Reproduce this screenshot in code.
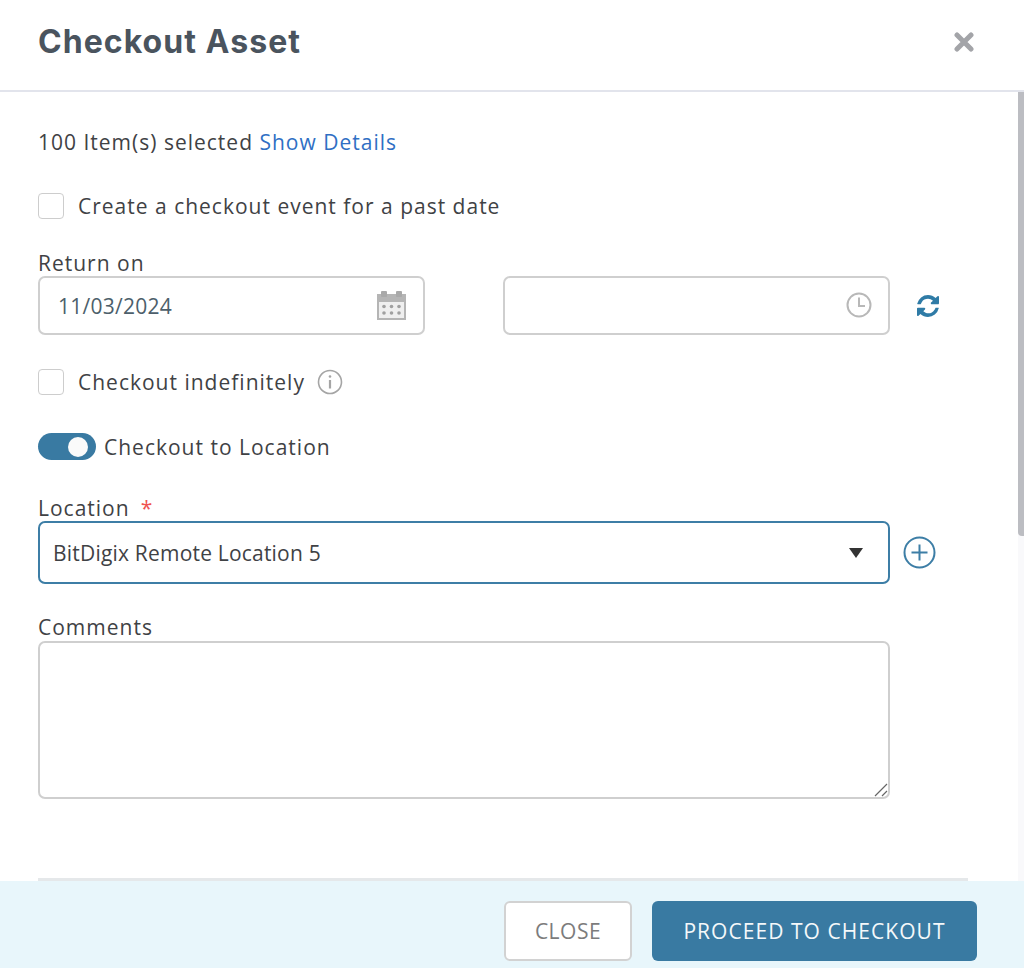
<style>
:global(body){margin:0;background:#fff}
.modal{width:1024px;height:968px;display:flex;flex-direction:column;overflow:hidden;font-family:"Open Sans",sans-serif;font-size:21px;letter-spacing:1px;color:#3f4245}
.head{height:92px;flex:none;box-sizing:border-box;border-bottom:2px solid #e2e4ec;display:flex;align-items:center;justify-content:space-between;padding:0 50px 6px 38px}
h1{margin:0;font:700 32px/1.2 Inter,sans-serif;letter-spacing:1.05px;color:#4a545e}
.x{width:20px;height:20px;display:block}
.mid{flex:1;min-height:0;display:flex}
.content{flex:1;display:flex;flex-direction:column;padding:0 0 0 38px}
.scroll{width:6px;flex:none;background:#f9f9fb}
.thumb{height:444px;background:#bcbdc2;border-radius:0 0 0 4px}
.row{display:flex;align-items:center}
.sel{margin-top:35px;line-height:30px}
a{color:#2f6fc4;text-decoration:none}
.check{margin-top:36px}
.box{width:24px;height:24px;border:1.5px solid #cdcdcd;border-radius:4px;margin-right:14px;box-sizing:content-box;flex:none}
.lbl{line-height:26px}
.ret{margin-top:31px;line-height:26px}
.fields{display:flex;margin-top:0}
.input{width:387px;height:59px;box-sizing:border-box;border:2px solid #cfcfcf;border-radius:7px;display:flex;align-items:center;justify-content:space-between;padding:0 17px 0 18px;color:#4d5f6b;flex:none;letter-spacing:.25px}
.input svg{position:relative;top:-1px}
.input+.input{margin-left:78px;padding-right:16px}
.refresh{margin-left:27px;width:22px;height:22px}
.ind{margin-top:34px}
.info{margin-left:12px;width:26px;height:26px}
.tog{margin-top:38px}
.switch{width:58px;height:27px;border-radius:14px;background:#397aa2;position:relative;margin-right:8px;flex:none}
.knob{position:absolute;right:8px;top:3.5px;width:20px;height:20px;border-radius:50%;background:#fafafa}
.loc{margin-top:35px;line-height:26px;display:flex}
.star{color:#ef5350;margin-left:11px}
.sel2{width:852px;height:63px;box-sizing:border-box;border:2px solid #3d7ea6;border-radius:7px;display:flex;align-items:center;justify-content:space-between;padding:0 25px 0 13px;color:#3f4245;flex:none;letter-spacing:.2px}
.caret{width:0;height:0;border-left:7px solid transparent;border-right:7px solid transparent;border-top:10px solid #333}
.plus{margin-left:13px;width:33px;height:33px}
.com{margin-top:30px;line-height:26px}
.area{width:852px;height:158px;box-sizing:border-box;border:2px solid #cfcfcf;border-radius:7px;position:relative;margin-top:1px;flex:none}
.grip{position:absolute;right:0;bottom:0;width:14px;height:14px}
.rule{margin-top:auto;height:3px;width:930px;background:#e5e8ea}
.foot{height:87px;flex:none;background:#e8f6fb;display:flex;justify-content:flex-end;align-items:center;gap:20px;padding:0 47px 0 0;font-size:21px}
.btn{height:60px;box-sizing:border-box;border-radius:6px;display:flex;align-items:center;justify-content:center;margin-top:12px}
.close{width:128px;background:#fff;border:2px solid #d2d2d2;color:#7c7c7c;letter-spacing:.5px}
.go{width:325px;background:#397aa2;color:#f4f8fa;letter-spacing:1.05px}
</style>

<div class="modal">
  <header class="head">
    <h1>Checkout Asset</h1>
    <svg class="x" viewBox="0 0 20 20"><path d="M3 3L17 17M17 3L3 17" stroke="#a3a4a8" stroke-width="5" stroke-linecap="round"/></svg>
  </header>
  <div class="mid">
    <div class="content">
      <div class="sel">100 Item(s) selected <a href="#top">Show Details</a></div>
      <div class="row check"><span class="box"></span><span class="lbl">Create a checkout event for a past date</span></div>
      <div class="ret">Return on</div>
      <div class="row fields">
        <div class="input"><span>11/03/2024</span>
          <svg width="30" height="30" viewBox="0 0 30 30"><rect x="1" y="4" width="29" height="26" fill="#b5b5b5"/><rect x="3" y="12" width="25" height="16" fill="#efefef"/><rect x="5" y="1" width="6" height="6" rx="1" fill="#a9a9a9"/><rect x="20" y="1" width="6" height="6" rx="1" fill="#a9a9a9"/><g fill="#a0a0a0"><circle cx="8" cy="16.500" r="1.800"/><circle cx="15.500" cy="16.500" r="1.800"/><circle cx="23" cy="16.500" r="1.800"/><circle cx="8" cy="23" r="1.800"/><circle cx="15.500" cy="23" r="1.800"/><circle cx="23" cy="23" r="1.800"/></g></svg>
        </div>
        <div class="input">
          <span></span>
          <svg width="26" height="26" viewBox="0 0 26 26" fill="none" stroke="#b8b8b8" stroke-width="2"><circle cx="13" cy="13" r="11.500"/><path d="M13 5.500V14H19"/></svg>
        </div>
        <svg class="refresh" viewBox="0 0 1536 1536"><path fill="#2f7ba6" d="M1511 928q0 5-1 7-64 268-268 434.500T764 1536q-146 0-282.500-55T238 1324l-129 129q-19 19-45 19t-45-19-19-45V960q0-26 19-45t45-19h448q26 0 45 19t19 45-19 45L440 1142q71 66 161 102t187 36q134 0 250-65t186-179q11-17 53-117 8-23 30-23h192q13 0 22.500 9.500T1531 928zM1536 128v448q0 26-19 45t-45 19h-448q-26 0-45-19t-19-45 19-45l138-138Q969 256 768 256q-134 0-250 65T332 500q-11 17-53 117-8 23-30 23H50q-13 0-22.500-9.500T18 608v-7q65-268 270-434.500T768 0q146 0 284 55.500T1297 212l130-129q19-19 45-19t45 19 19 45z"/></svg>
      </div>
      <div class="row ind"><span class="box"></span><span class="lbl">Checkout indefinitely</span>
        <svg class="info" viewBox="0 0 26 26" fill="none" stroke="#a5a5a5" stroke-width="1.600"><circle cx="13" cy="13" r="11.500"/><path d="M13 11V19.500" stroke-width="2.200"/><circle cx="13" cy="7.500" r="1.300" fill="#a5a5a5" stroke="none"/></svg>
      </div>
      <div class="row tog"><span class="switch"><span class="knob"></span></span><span class="lbl">Checkout to Location</span></div>
      <div class="loc">Location<span class="star">*</span></div>
      <div class="row">
        <div class="sel2"><span>BitDigix Remote Location 5</span><span class="caret"></span></div>
        <svg class="plus" viewBox="0 0 33 33" fill="none" stroke="#3d7ea6" stroke-width="2"><circle cx="16.500" cy="16.500" r="15"/><path d="M16.500 8.500V24.500M8.500 16.500H24.500"/></svg>
      </div>
      <div class="com">Comments</div>
      <div class="area">
        <svg class="grip" viewBox="0 0 14 14" stroke="#666" stroke-width="1.200"><path d="M1 13L13 1M8 13L13 8"/></svg>
      </div>
      <div class="rule"></div>
    </div>
    <div class="scroll"><div class="thumb"></div></div>
  </div>
  <footer class="foot">
    <div class="btn close">CLOSE</div>
    <div class="btn go">PROCEED TO CHECKOUT</div>
  </footer>
</div>
